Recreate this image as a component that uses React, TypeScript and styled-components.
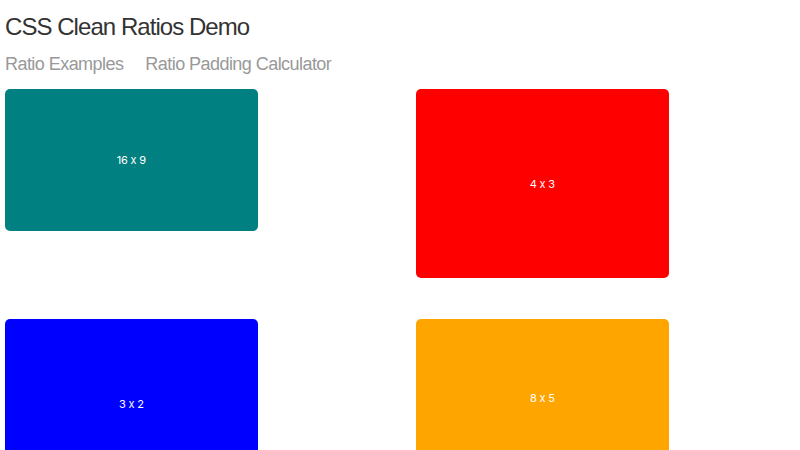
import React from 'react'
import styled, { createGlobalStyle } from 'styled-components'

const GlobalStyle = createGlobalStyle`
  html, body {
    margin: 0;
    padding: 0;
    background: #fff;
  }
  body {
    font-family: "Liberation Sans", Arial, sans-serif;
    overflow: hidden;
  }
`

const Page = styled.div`
  padding: 12px 5px 0 5px;
`

const Title = styled.h1`
  margin: 0;
  font-size: 24px;
  line-height: 29px;
  font-weight: 400;
  letter-spacing: -0.95px;
  color: #333;
`

const Tabs = styled.nav`
  display: flex;
  gap: 22px;
  margin-top: 12px;
`

const Tab = styled.a`
  font-size: 18px;
  line-height: 22px;
  letter-spacing: -0.55px;
  color: #999;
  text-decoration: none;
  cursor: pointer;
`

const Grid = styled.div`
  display: grid;
  grid-template-columns: 1fr 1fr;
  column-gap: 32px;
  row-gap: 41px;
  margin-top: 14px;
  align-items: start;
`

const Box = styled.div<{ $w: number; $h: number; $bg: string }>`
  width: 66.667%;
  aspect-ratio: ${(p) => p.$w} / ${(p) => p.$h};
  background: ${(p) => p.$bg};
  border-radius: 5px;
  display: flex;
  align-items: center;
  justify-content: center;
  color: #fff;
  font-family: Inter, "Noto Sans", sans-serif;
  font-feature-settings: "calt" 0;
  font-size: 11px;
  letter-spacing: -0.2px;
`

const ratios = [
  { w: 16, h: 9, bg: '#008080' },
  { w: 4, h: 3, bg: '#ff0000' },
  { w: 3, h: 2, bg: '#0000ff' },
  { w: 8, h: 5, bg: '#ffa500' },
]

export default function App() {
  return (
    <>
      <GlobalStyle />
      <Page>
        <Title>CSS Clean Ratios Demo</Title>
        <Tabs>
          <Tab>Ratio Examples</Tab>
          <Tab>Ratio Padding Calculator</Tab>
        </Tabs>
        <Grid>
          {ratios.map((r) => (
            <Box key={`${r.w}x${r.h}`} $w={r.w} $h={r.h} $bg={r.bg}>
              {r.w} x {r.h}
            </Box>
          ))}
        </Grid>
      </Page>
    </>
  )
}
